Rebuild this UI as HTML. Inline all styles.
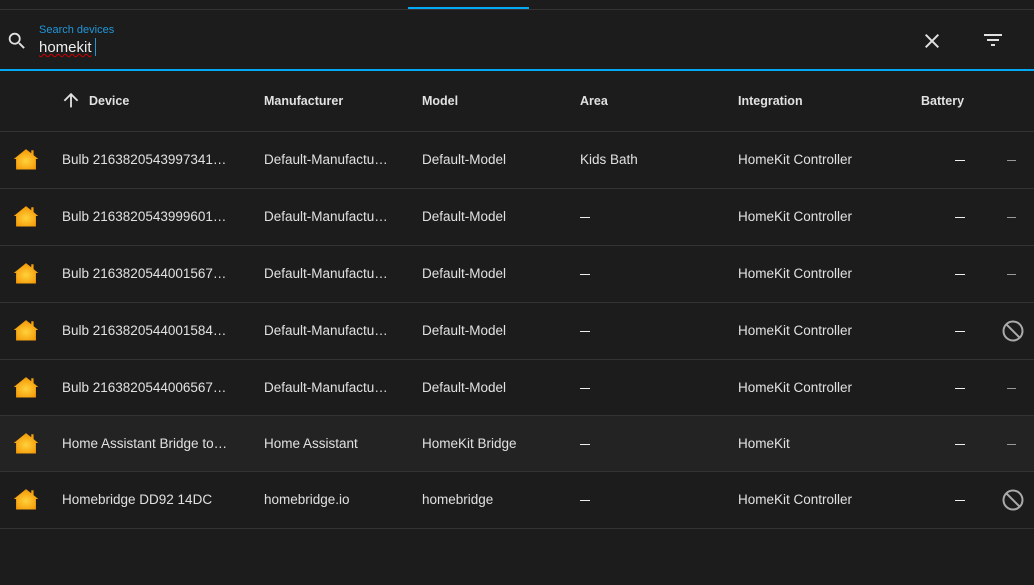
<!DOCTYPE html>
<html><head><style>
body{margin:0;width:1034px;height:552px;background:#1c1c1c;font-family:"Liberation Sans",sans-serif;color:#e1e1e1;overflow:hidden;position:relative;font-size:13.5px}
.abs{position:absolute}
.row{position:absolute;left:0;width:1034px;height:56px;border-top:1px solid #333}
.row div{position:absolute;top:0;line-height:56px;white-space:nowrap}
.h{position:absolute;top:71px;line-height:60px;font-weight:bold;font-size:12.5px}
.dash{display:inline-block;width:10px;height:1.5px;background:#eee;vertical-align:middle}
.dash2{display:inline-block;width:9px;height:1px;background:#999;vertical-align:middle}
</style></head><body>
<div class="abs" style="left:0;top:9px;width:1034px;height:1px;background:#333"></div>
<div class="abs" style="left:408px;top:7px;width:121px;height:2px;background:#03a9f4"></div>
<svg class="abs" style="left:6px;top:30px" width="22" height="22" viewBox="0 0 24 24"><path fill="#e1e1e1" d="M9.5,3A6.5,6.5 0 0,1 16,9.5C16,11.110 15.41,12.59 14.44,13.73L14.71,14H15.5L20.5,19L19,20.5L14,15.5V14.71L13.73,14.44C12.59,15.41 11.11,16 9.5,16A6.5,6.5 0 0,1 3,9.5A6.5,6.5 0 0,1 9.5,3M9.5,5C7,5 5,7 5,9.5C5,12 7,14 9.5,14C12,14 14,12 14,9.5C14,7 12,5 9.5,5Z"/></svg>
<div class="abs" style="left:39px;top:24px;font-size:11px;color:#2196d8">Search devices</div>
<div class="abs" style="left:39px;top:39px;font-size:15px;color:#eee;text-decoration:underline wavy #c00;text-decoration-thickness:1px">homekit</div>
<div class="abs" style="left:95px;top:38px;width:1px;height:18px;background:#2196d8"></div>
<svg class="abs" style="left:920px;top:29px" width="24" height="24" viewBox="0 0 24 24"><path fill="#e1e1e1" d="M19,6.41L17.59,5L12,10.59L6.41,5L5,6.41L10.59,12L5,17.59L6.41,19L12,13.41L17.59,19L19,17.59L13.41,12L19,6.41Z"/></svg>
<svg class="abs" style="left:981px;top:28px" width="24" height="24" viewBox="0 0 24 24"><path fill="#e1e1e1" d="M3 6h18v2H3zM6 11h12v2H6zM10 16h4v2h-4z"/></svg>
<div class="abs" style="left:0;top:69px;width:1034px;height:2px;background:#03a9f4"></div>
<svg class="abs" style="left:60px;top:89px" width="22" height="22" viewBox="0 0 24 24"><path fill="#e1e1e1" d="M13,20H11V8L5.5,13.5L4.08,12.08L12,4.16L19.92,12.08L18.5,13.5L13,8V20Z"/></svg>
<div class="h" style="left:89px">Device</div>
<div class="h" style="left:264px">Manufacturer</div>
<div class="h" style="left:422px">Model</div>
<div class="h" style="left:580px">Area</div>
<div class="h" style="left:738px">Integration</div>
<div class="h" style="left:921px">Battery</div>
<div id="rows"></div>
<script>
const d=[["Bulb 2163820543997341…","Default-Manufactu…","Default-Model","Kids Bath","HomeKit Controller",0],
["Bulb 2163820543999601…","Default-Manufactu…","Default-Model","—","HomeKit Controller",0],
["Bulb 2163820544001567…","Default-Manufactu…","Default-Model","—","HomeKit Controller",0],
["Bulb 2163820544001584…","Default-Manufactu…","Default-Model","—","HomeKit Controller",1],
["Bulb 2163820544006567…","Default-Manufactu…","Default-Model","—","HomeKit Controller",0],
["Home Assistant Bridge to…","Home Assistant","HomeKit Bridge","—","HomeKit",0],
["Homebridge DD92 14DC","homebridge.io","homebridge","—","HomeKit Controller",1]];
const tops=[131,188,245,302,359,415,471];
let h="";
d.forEach((r,i)=>{
h+=`<div class="row" style="top:${tops[i]}px;${i==5?'background:#232323':''}">
<svg style="position:absolute;left:12px;top:14px" width="28" height="26" viewBox="0 0 24 22"><defs><radialGradient id="g${i}" cx="50%" cy="58%" r="60%"><stop offset="0" stop-color="#ffd23c"/><stop offset="1" stop-color="#f39200"/></radialGradient></defs><path fill="url(#g${i})" d="M1.5 11L12 2.5l4.5 3.6V3.5h2v4.2L22.5 11H20.5v9H3.5V11z"/></svg>
<div style="left:62px">${r[0]}</div><div style="left:264px">${r[1]}</div><div style="left:422px">${r[2]}</div>
<div style="left:580px">${r[3]=="—"?'<span class="dash"></span>':r[3]}</div><div style="left:738px">${r[4]}</div>
<div style="left:955px"><span class="dash"></span></div>
<div style="left:${r[5]?1001:1007}px">${r[5]?'<svg style="vertical-align:middle" width="24" height="24" viewBox="0 0 24 24"><circle cx="12" cy="12" r="9.5" fill="none" stroke="#aaa" stroke-width="2"/><path d="M5.5 5.5l13 13" stroke="#aaa" stroke-width="2"/></svg>':'<span class="dash2"></span>'}</div></div>`;});
h+=`<div class="row" style="top:528px"></div>`;
document.getElementById("rows").innerHTML=h;
</script>
</body></html>
